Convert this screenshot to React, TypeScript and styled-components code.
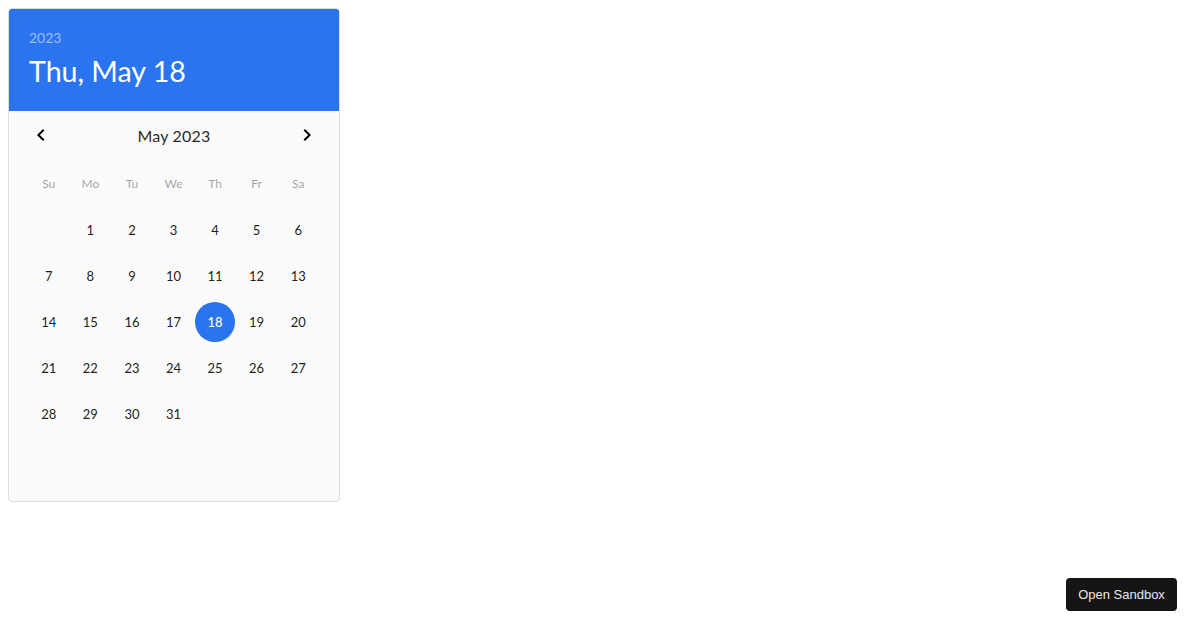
import React from "react";
import styled, { createGlobalStyle } from "styled-components";

const Global = createGlobalStyle`
  html, body { margin: 0; padding: 0; background: #ffffff; }
  body { margin: 8px; font-family: Lato, "Noto Sans", sans-serif; }
  * { box-sizing: border-box; }
`;

const BLUE = "#2a74f0";

const Card = styled.div`
  width: 332px;
  height: 494px;
  border: 1px solid #dedede;
  border-radius: 4px;
  overflow: hidden;
  background: #fafafa;
  display: flex;
  flex-direction: column;
`;

const Header = styled.div`
  background: ${BLUE};
  height: 102px;
  padding: 21px 20px 0 20px;
  display: flex;
  flex-direction: column;
`;

const Year = styled.div`
  font-size: 14px;
  line-height: 16px;
  color: rgba(255, 255, 255, 0.54);
`;

const DateTitle = styled.div`
  margin-top: 8px;
  font-size: 28.6px;
  line-height: 34px;
  color: #ffffff;
`;

const Nav = styled.div`
  height: 48px;
  padding: 0 8px;
  display: flex;
  align-items: center;
  justify-content: space-between;
`;

const NavButton = styled.button`
  border: 0;
  background: transparent;
  padding: 12px;
  width: 48px;
  height: 48px;
  display: flex;
  align-items: center;
  justify-content: center;
  cursor: pointer;
  svg { display: block; }
`;

const MonthLabel = styled.div`
  font-size: 16px;
  color: rgba(0, 0, 0, 0.87);
  letter-spacing: 0.2px;
`;

const Grid = styled.div<{ $rowHeight: number }>`
  display: grid;
  grid-template-columns: repeat(7, 1fr);
  grid-auto-rows: ${(p) => p.$rowHeight}px;
  padding: 0 20px 0 19px;
`;

const WeekDay = styled.div`
  display: flex;
  align-items: center;
  justify-content: center;
  font-size: 12px;
  color: rgba(0, 0, 0, 0.38);
`;

const DayCell = styled.div`
  display: flex;
  align-items: center;
  justify-content: center;
`;

const Day = styled.div<{ $selected?: boolean }>`
  width: 40px;
  height: 40px;
  border-radius: 50%;
  display: flex;
  align-items: center;
  justify-content: center;
  font-size: 13px;
  color: ${(p) => (p.$selected ? "#ffffff" : "rgba(0,0,0,0.9)")};
  background: ${(p) => (p.$selected ? BLUE : "transparent")};
  font-weight: ${(p) => (p.$selected ? 500 : 400)};
`;

const SandboxButton = styled.button`
  position: fixed;
  right: 23px;
  bottom: 19px;
  width: 111px;
  height: 33px;
  border: 0;
  border-radius: 4px;
  background: #151515;
  color: #e8e8e8;
  font-family: "Liberation Sans", Arial, sans-serif;
  font-size: 13px;
  cursor: pointer;
`;

const weekdays = ["Su", "Mo", "Tu", "We", "Th", "Fr", "Sa"];

export default function App() {
  const cells: (number | null)[] = [];
  for (let i = 0; i < 1; i++) cells.push(null);
  for (let d = 1; d <= 31; d++) cells.push(d);
  while (cells.length < 42) cells.push(null);

  return (
    <>
      <Global />
      <Card>
        <Header>
          <Year>2023</Year>
          <DateTitle>Thu, May 18</DateTitle>
        </Header>
        <Nav>
          <NavButton aria-label="previous month">
            <svg width="24" height="24" viewBox="0 0 24 24">
              <path d="M15.41 7.41L14 6l-6 6 6 6 1.41-1.41L10.83 12z" fill="#000" />
            </svg>
          </NavButton>
          <MonthLabel>May 2023</MonthLabel>
          <NavButton aria-label="next month">
            <svg width="24" height="24" viewBox="0 0 24 24">
              <path d="M10 6L8.59 7.41 13.17 12l-4.58 4.59L10 18l6-6z" fill="#000" />
            </svg>
          </NavButton>
        </Nav>
        <Grid $rowHeight={48}>
          {weekdays.map((w) => (
            <WeekDay key={w}>{w}</WeekDay>
          ))}
        </Grid>
        <Grid $rowHeight={46}>
          {cells.map((d, i) => (
            <DayCell key={i}>
              {d !== null && <Day $selected={d === 18}>{d}</Day>}
            </DayCell>
          ))}
        </Grid>
      </Card>
      <SandboxButton>Open Sandbox</SandboxButton>
    </>
  );
}
